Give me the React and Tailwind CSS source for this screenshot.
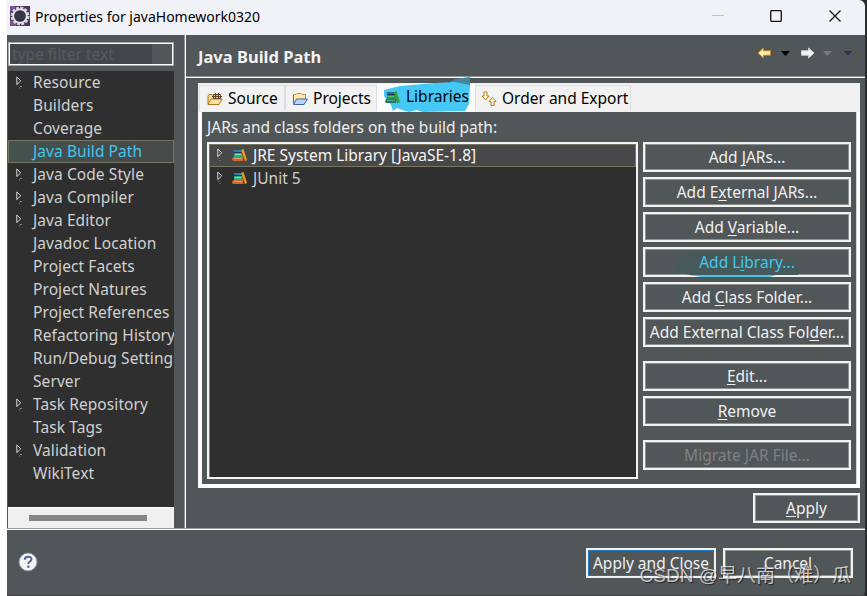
import clsx from 'clsx'

const treeItems = [
  { name: 'Resource', expandable: true },
  { name: 'Builders' },
  { name: 'Coverage' },
  { name: 'Java Build Path', selected: true },
  { name: 'Java Code Style', expandable: true },
  { name: 'Java Compiler', expandable: true },
  { name: 'Java Editor', expandable: true },
  { name: 'Javadoc Location' },
  { name: 'Project Facets' },
  { name: 'Project Natures' },
  { name: 'Project References' },
  { name: 'Refactoring History' },
  { name: 'Run/Debug Settings' },
  { name: 'Server' },
  { name: 'Task Repository', expandable: true },
  { name: 'Task Tags' },
  { name: 'Validation', expandable: true },
  { name: 'WikiText' },
]

// "&" marks the mnemonic letter
const actions = [
  { label: 'Add &JARs...' },
  { label: 'Add E&xternal JARs...' },
  { label: 'Add &Variable...' },
  { label: 'Add L&ibrary...', marked: true },
  { label: 'Add &Class Folder...' },
  { label: 'Add External Class Fol&der...' },
  { label: '&Edit...', className: 'mt-[9px]' },
  { label: '&Remove' },
  { label: 'Migrate JAR File...', disabled: true, className: 'mt-[9px]' },
]

function Mnemonic({ label }) {
  const i = label.indexOf('&')
  if (i < 0) return label
  return (
    <>
      {label.slice(0, i)}
      <span className="underline decoration-1 underline-offset-[2px]">{label[i + 1]}</span>
      {label.slice(i + 2)}
    </>
  )
}

function Button({ label, className, disabled, marked }) {
  return (
    <button
      className={clsx(
        'relative flex h-[30px] shrink-0 items-center justify-center border-2 border-[#f2f2f0] whitespace-nowrap shadow-[inset_0_0_0_1px_#8d9190]',
        disabled ? 'text-[#7f8282]' : marked ? 'text-[#45c8ee]' : 'text-[#f0f0f0]',
        className
      )}
    >
      {marked && (
        <svg className="absolute -left-0.5 -top-0.5" width="208" height="30" viewBox="0 0 208 30">
          <path d="M33 11h10V4h92v10h20v14H48L33 25z" fill="#46595b" />
          <path d="M46 28h87l-6 2H58z" fill="#45c8ee" />
        </svg>
      )}
      <span className="relative">
        <Mnemonic label={label} />
      </span>
    </button>
  )
}

function Twisty({ className, tail = 'M4 10.5h2M3 12h1' }) {
  return (
    <svg className={className} width="7" height="13" viewBox="0 0 7 13" fill="none">
      <path d="M.8 1v7.6L4.8 4.8z" stroke="#d8d8d8" strokeWidth="1" />
      <path d={tail} stroke="#8a8a8a" />
    </svg>
  )
}

function BooksIcon({ green }) {
  return (
    <svg width="16" height="14" viewBox="0 0 16 14">
      <path d="M1 2h8l1 2H3z" fill={green ? '#28699a' : '#2382ae'} />
      <path d="M2 4h8v1H2z" fill="#153c50" />
      <path d="M2 5h8l1 4H2z" fill={green ? '#259455' : '#2bac83'} />
      <path d="M3 6h6v1H3z" fill={green ? '#63bd73' : '#8cdaae'} />
      <path d="M1 9h10v4H1l-1-1.500z" fill={green ? '#24796d' : '#cc6933'} />
      <path d="M2 10h8v1H2z" fill={green ? '#4eaa88' : '#e59a61'} />
      <path d="M9 2l2.500-1L15 12l-2 1z" fill={green ? '#36a52c' : '#ed9b1d'} />
      <path d="M9 2l3 11h1z" fill={green ? '#1e7b34' : '#a55212'} />
    </svg>
  )
}

function SourceIcon() {
  return (
    <svg width="16" height="14" viewBox="0 0 16 14" fill="none">
      <path d="M1 12V4l1-1.5h3L6.5 4H12v3" fill="#f7d992" stroke="#ad7521" />
      <path d="M1 12.5L4 7h11.3L12 12.5z" fill="#ffe29b" stroke="#b27a28" />
      <path d="M6.500 2.500h7v4h-7zM8.500 1v6M11.500 1v6M5 4.500h10" stroke="#68442e" />
    </svg>
  )
}

function ProjectsIcon() {
  return (
    <svg width="16" height="14" viewBox="0 0 16 14" fill="none">
      <path d="M1.5 12V2.5H4l1-1h4l1 1h3.5v5" fill="#fae9a9" stroke="#bb914c" />
      <path d="M1.5 3v9" stroke="#536aa7" />
      <path d="M1.5 12.5L4.5 7H15.3L12 12.5z" fill="#b8d4fb" stroke="#4264b5" />
    </svg>
  )
}

function OrderIcon() {
  return (
    <svg width="16" height="16" viewBox="0 0 16 16" fill="#fff4d2" stroke="#b98216">
      <path d="M3 1h3v4h2L4.5 9 1 5h2z" />
      <path d="M10 14.5h3v-4h2L11.500 6.500 8 10.500h2z" />
    </svg>
  )
}

function EclipseIcon() {
  return (
    <svg width="20" height="20" viewBox="0 0 20 20">
      <path d="M0 0h20v20H0z" fill="#493762" />
      <path d="M0 0h5v5H0zM0 15h6v5H0z" fill="#745395" />
      <circle cx="10" cy="10" r="8.2" fill="none" stroke="#d7d4d7" strokeWidth="2.400" strokeDasharray="2.900 1.400" />
      <circle cx="10" cy="10" r="6.800" fill="#302c43" stroke="#e2dfdf" strokeWidth="1.900" />
      <path d="M5.500 8h9M5 10h10M5.500 12h9" stroke="#454059" />
    </svg>
  )
}

function TitleBar() {
  return (
    <div className="flex h-[35px] shrink-0 items-center rounded-tr-[6px] bg-[#f1f2f8] text-black">
      <div className="ml-[3px] -mt-[3px]">
        <EclipseIcon />
      </div>
      <h1 className="ml-[5px] -mt-[2px] text-[14px]">Properties for javaHomework0320</h1>
      <svg className="ml-auto mr-[23px] -mt-[3px]" width="130" height="14" viewBox="0 0 130 14" fill="none">
        <path d="M0 6.500h12" stroke="#c1c2c6" />
        <rect x="58.700" y="1.700" width="10.600" height="10.600" rx="1" stroke="#111" strokeWidth="1.300" />
        <path d="M117.500 1.500l11 11M128.500 1.500l-11 11" stroke="#111" strokeWidth="1.200" />
      </svg>
    </div>
  )
}

function Sidebar() {
  return (
    <aside className="flex w-[179px] shrink-0 flex-col border-r border-white pl-px pt-[7px] shadow-[inset_-1px_0_0_#8b8f90]">
      <div className="h-6 w-[166px] shrink-0 border border-[#a5a8a8] bg-[#515658]">
        <div className="h-full border border-white">
          <div className="flex h-full w-[142px] items-center bg-[#42474a] pl-0.5 text-[#575b5d]">
            type filter text
          </div>
        </div>
      </div>
      <div className="mt-[5px] h-[436px] w-[166px] overflow-hidden bg-[#2f2f2f] tracking-[0.08px]">
        {treeItems.map((item) => (
          <div
            key={item.name}
            className={clsx(
              'flex h-[23px] items-center pb-px whitespace-nowrap',
              item.selected
                ? 'bg-linear-to-r from-[#425350] to-[#484848] text-[#43c6ec] outline outline-1 -outline-offset-1 outline-[#777660]'
                : 'text-[#d0d0d0]'
            )}
          >
            <div className="w-[25px] shrink-0 pl-2">{item.expandable && <Twisty />}</div>
            {item.name}
          </div>
        ))}
      </div>
      <div className="flex h-[21px] w-[166px] items-center border-t border-white bg-[#f0f0f0]">
        <div className="ml-[21px] h-1.5 w-[118px] bg-[#858585]" />
      </div>
    </aside>
  )
}

function PageHeader() {
  return (
    <div className="flex h-[43px] shrink-0 items-center justify-between border-b border-white pl-3 pr-3 shadow-[inset_0_-1px_0_#929696]">
      <h2 className="pt-px text-[16.5px] font-bold text-[#f3f3f3]">Java Build Path</h2>
      <svg className="-mt-[7px]" width="96" height="14" viewBox="0 0 96 14">
        <path d="M1 7l5.500-5v2.800h7v4.400h-7V12z" fill="#fff0b1" stroke="#c58a20" />
        <path d="M24 5h9l-4.500 5z" fill="#000" />
        <path d="M57 7l-5.500-5v2.800h-7v4.400h7V12z" fill="#f2f2f2" stroke="#d2d2d2" />
        <path d="M66 5h9l-4.500 5z" fill="#777a7d" />
        <path d="M87.500 5.500h7L91 9z" fill="#393147" stroke="#39205e" />
      </svg>
    </div>
  )
}

function Tab({ icon, label, className }) {
  return (
    <div className={clsx('flex h-[26px] items-center border border-b-0 border-[#dedede] bg-[#f2f2f2]', className)}>
      <span className="mr-[5px] shrink-0">{icon}</span>
      <span className="-mt-0.5">{label}</span>
    </div>
  )
}

function TabFolder() {
  return (
    <div className="ml-3 mr-[5px] mt-[5px] flex h-[405px] flex-col bg-[#fdfdfd]">
      <div className="flex h-[29px] shrink-0 items-end bg-[#f0f0f0] pb-px pl-px whitespace-nowrap text-black">
        <Tab icon={<SourceIcon />} label="Source" className="w-[86px] pl-[7px]" />
        <Tab icon={<ProjectsIcon />} label="Projects" className="w-[92px] pl-[6px]" />
        <div className="relative -mb-px flex h-7 w-[98px] items-center bg-[#fbfbfb] pl-2">
          <svg className="absolute left-0 -top-2" width="98" height="38" viewBox="0 0 98 38">
            <path d="M73 6l5-3 15-2v9l-20 3z" fill="#438599" />
            <path d="M7 14l16-4 35-3 20-1 15 3-1 19-4 7-43 1-5-2-8 2-7-2-5-2-4 3-2-6-7-9z" fill="#45c8f6" />
          </svg>
          <span className="relative mr-[5px] -mt-[2px]">
            <BooksIcon green />
          </span>
          <span className="relative -mt-1">Libraries</span>
        </div>
        <Tab icon={<OrderIcon />} label="Order and Export" className="w-[156px] border-r pl-[5px]" />
      </div>
      <div className="mb-1 ml-1 mr-[3px] flex min-h-0 flex-1 flex-col border-r border-[#d9dada] bg-[#515658] pl-[5px] text-[#f0f0f0]">
        <div className="flex h-[30px] shrink-0 items-center">JARs and class folders on the build path:</div>
        <div className="flex">
          <div className="h-[337px] w-[431px] border-2 border-[#f5f5f5] bg-[#2f2f2f] shadow-[inset_1px_1px_0_#7b7c7b]">
            <div className="flex h-[23px] items-center border border-[#777660] bg-[#484848] pb-0.5 pl-[7px] text-[#f7f7f7]">
              <Twisty tail="M2 10v1M3 12v1" />
              <span className="ml-2 mr-[5px]">
                <BooksIcon />
              </span>
              JRE System Library [JavaSE-1.8]
            </div>
            <div className="flex h-[23px] items-center pb-0.5 pl-2 text-[#cecece]">
              <Twisty tail="M2 10v1M3 12v1" />
              <span className="ml-2 mr-[5px]">
                <BooksIcon />
              </span>
              JUnit 5
            </div>
          </div>
          <div className="ml-[5px] flex w-52 flex-col gap-[5px]">
            {actions.map((action) => (
              <Button key={action.label} {...action} />
            ))}
          </div>
        </div>
      </div>
    </div>
  )
}

function Footer() {
  return (
    <footer className="relative flex h-[67px] shrink-0 items-center border-t border-white pl-[11px] pr-3 shadow-[0_-1px_0_#9a9d9d,inset_0_-1px_0_#494348]">
      <svg className="-mt-0.5" width="20" height="20" viewBox="0 0 20 20">
        <circle cx="10" cy="10" r="9" fill="#f4f4f5" stroke="#8190aa" />
        <path d="M6.800 7.700c0-4 6.700-4 6.700-.4 0 2.200-3.200 2.300-3.200 4.600" fill="none" stroke="#53648c" strokeWidth="2" />
        <path d="M9.200 13.600h2.200v2.200H9.200z" fill="#53648c" />
      </svg>
      <div className="ml-auto flex gap-[7px]">
        <button className="flex h-[30px] w-[130px] items-center justify-center border-2 border-[#f2f2f0] whitespace-nowrap text-[#f0f0f0] shadow-[inset_0_0_0_1px_#1976bd]">
          Apply and Close
        </button>
        <Button label="Cancel" className="w-[130px]" />
      </div>
      <div className="absolute bottom-[6px] right-[14px] font-['Liberation_Sans','Noto_Sans_CJK_SC',sans-serif] text-[19px] leading-7 whitespace-nowrap text-white/70 [text-shadow:1px_1px_1px_rgba(0,0,0,0.6)]">
        CSDN @早八南（难）瓜
      </div>
    </footer>
  )
}

export default function App() {
  return (
    <div className="flex h-[596px] w-[867px] overflow-hidden bg-white pl-[7px] font-['Noto_Sans',sans-serif] text-[15.5px] leading-5">
      <div className="flex min-w-0 flex-1 flex-col bg-[#292b2c] pr-0.5">
        <TitleBar />
        <div className="flex min-h-0 flex-1 flex-col rounded-br-[5px] bg-[#515658]">
          <div className="flex min-h-0 flex-1">
            <Sidebar />
            <main className="flex min-w-0 flex-1 flex-col">
              <PageHeader />
              <TabFolder />
              <Button label="&Apply" className="mr-[5px] mt-[5px] w-[107px] self-end" />
            </main>
          </div>
          <Footer />
        </div>
      </div>
    </div>
  )
}
